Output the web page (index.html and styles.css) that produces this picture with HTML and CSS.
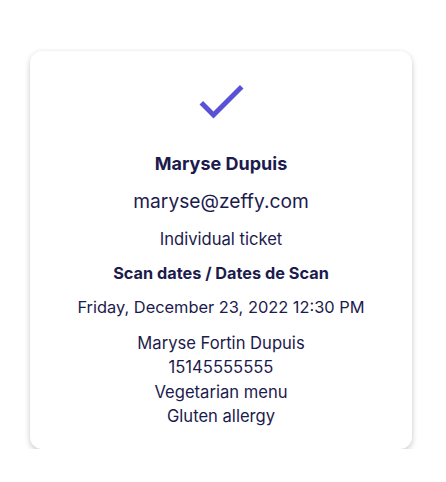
FILE: index.html
```html
<!DOCTYPE html>
<html lang="en">
<head>
    <meta charset="UTF-8">
    <meta name="viewport" content="width=device-width, initial-scale=1.0">
    <title>Ticket scan</title>
    <link rel="stylesheet" href="styles.css">
</head>
<body>
    <div class="card">
        <!-- Check icon -->
        <svg class="check" viewBox="0 0 24 24" width="60" height="60">
            <path d="M9 16.17 4.83 12l-1.42 1.41L9 19 21 7l-1.41-1.41z"></path>
        </svg>

        <div class="name">Maryse Dupuis</div>
        <div class="email">maryse@zeffy.com</div>
        <div class="ticket">Individual ticket</div>
        <div class="scan-title">Scan dates / Dates de Scan</div>
        <div class="scan-date">Friday, December 23, 2022 12:30 PM</div>

        <!-- Answers -->
        <div class="answers">
            <div>Maryse Fortin Dupuis</div>
            <div>15145555555</div>
            <div>Vegetarian menu</div>
            <div>Gluten allergy</div>
        </div>
    </div>
</body>
</html>
```

FILE: styles.css
```css
/* Base */
body {
    margin: 0;
    background: #fff;
    font-family: Inter, Roboto, sans-serif;
    color: #1c1b4d;
}
.card {
    width: 382px;
    margin: 51px 0 0 30px;
    padding: 20px 0 21px;
    box-sizing: border-box;
    background: #fff;
    border-radius: 12px;
    box-shadow: 0 3px 6px rgba(0, 0, 0, 0.18), 0 0 4px rgba(0, 0, 0, 0.05);
    display: flex;
    flex-direction: column;
    align-items: center;
    text-align: center;
}
.check {
    fill: #5a52d6;
    display: block;
}
.name {
    margin-top: 21px;
    font-size: 18px;
    line-height: 24px;
    font-weight: 700;
}
.email {
    margin-top: 11px;
    font-size: 19.2px;
    line-height: 28px;
}
.ticket {
    margin-top: 12px;
    font-size: 16.6px;
    line-height: 24px;
}
.scan-title {
    margin-top: 10px;
    font-size: 16.3px;
    line-height: 24px;
    font-weight: 700;
}
.scan-date {
    margin-top: 10px;
    font-size: 16.4px;
    line-height: 24px;
}
.answers {
    margin-top: 12px;
    font-size: 16.6px;
    line-height: 24.3px;
}
```
